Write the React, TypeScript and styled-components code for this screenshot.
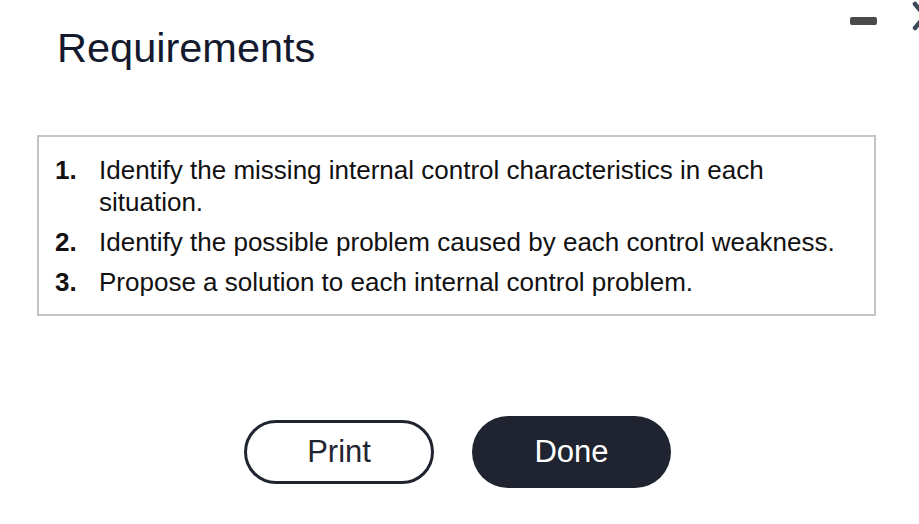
import React from 'react';
import styled, { createGlobalStyle } from 'styled-components';

const GlobalStyle = createGlobalStyle`
  html, body {
    margin: 0;
    padding: 0;
    background: #ffffff;
    overflow: hidden;
  }
  body {
    font-family: 'Liberation Sans', Arial, Helvetica, sans-serif;
  }
`;

const Dialog = styled.div`
  position: relative;
  width: 919px;
  height: 524px;
  box-sizing: border-box;
  padding: 25px 43px 0 37px;
  display: flex;
  flex-direction: column;
`;

const WindowControls = styled.div`
  position: absolute;
  top: 0;
  right: 0;
  width: 80px;
  height: 36px;
`;

const MinimizeBar = styled.div`
  position: absolute;
  left: 11px;
  top: 17px;
  width: 27px;
  height: 8px;
  border-radius: 2px;
  background: #4a4a4a;
`;

const CloseIcon = styled.svg`
  position: absolute;
  left: 73px;
  top: 1px;
`;

const Title = styled.h1`
  margin: 0 0 0 20px;
  font-size: 41.5px;
  font-weight: 400;
  color: #131a2e;
  line-height: 46px;
`;

const RequirementBox = styled.div`
  margin-top: 64px;
  border: 2px solid #c4c4c4;
  padding: 17px 16px 16px 16px;
`;

const List = styled.ol`
  margin: 0;
  padding: 0;
  list-style: none;
  display: flex;
  flex-direction: column;
  gap: 8px;
`;

const Item = styled.li`
  display: flex;
  font-size: 26px;
  line-height: 32px;
  color: #111111;
`;

const Num = styled.span`
  font-weight: 700;
  width: 44px;
  flex-shrink: 0;
`;

const ItemText = styled.span`
  flex: 1;
`;

const ButtonRow = styled.div`
  margin-top: 100px;
  display: flex;
  justify-content: center;
  align-items: center;
  gap: 38px;
  padding-left: 2px;
`;

const PillButton = styled.button<{ $primary?: boolean }>`
  font-family: 'Liberation Sans', Arial, Helvetica, sans-serif;
  font-size: 31px;
  border-radius: 36px;
  cursor: pointer;
  box-sizing: border-box;
  padding: 0;
  width: ${({ $primary }) => ($primary ? '199px' : '190px')};
  height: ${({ $primary }) => ($primary ? '72px' : '64px')};
  background: ${({ $primary }) => ($primary ? '#1f2430' : '#ffffff')};
  color: ${({ $primary }) => ($primary ? '#ffffff' : '#1f2430')};
  border: ${({ $primary }) => ($primary ? 'none' : '3px solid #1f2430')};
`;

const requirements = [
  'Identify the missing internal control characteristics in each situation.',
  'Identify the possible problem caused by each control weakness.',
  'Propose a solution to each internal control problem.',
];

export default function App() {
  return (
    <>
      <GlobalStyle />
      <Dialog>
        <WindowControls>
          <MinimizeBar />
          <CloseIcon width="26" height="30" viewBox="0 0 26 30">
            <path d="M3 3 L23 27 M23 3 L3 27" stroke="#3d4a5c" strokeWidth="4.5" strokeLinecap="round" />
          </CloseIcon>
        </WindowControls>
        <Title>Requirements</Title>
        <RequirementBox>
          <List>
            {requirements.map((text, i) => (
              <Item key={i}>
                <Num>{i + 1}.</Num>
                <ItemText>{text}</ItemText>
              </Item>
            ))}
          </List>
        </RequirementBox>
        <ButtonRow>
          <PillButton>Print</PillButton>
          <PillButton $primary>Done</PillButton>
        </ButtonRow>
      </Dialog>
    </>
  );
}
